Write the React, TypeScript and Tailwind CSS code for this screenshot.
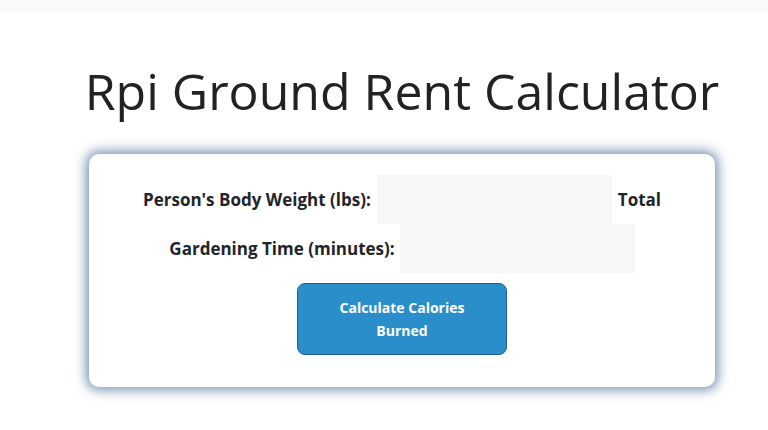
export default function App() {
  return (
    <div className="min-h-screen bg-white font-['Open_Sans',sans-serif] text-[#212529]">
      <div className="h-[12px] bg-[#f8f9fa]" />

      <div className="pl-[36px]">
        <h1 className="mt-[47px] text-center text-[50px] leading-[64px] font-normal text-[#222]">
          Rpi Ground Rent Calculator
        </h1>

        <div className="mx-auto mt-[31px] w-[626px] rounded-[10px] bg-white pt-[21px] pb-[32px] shadow-[0_0_12px_3px_rgba(60,100,145,0.7)]">
          {/* Inputs */}
          <div className="flex items-center justify-center gap-[6px]">
            <label className="text-[17px] font-bold">Person's Body Weight (lbs):</label>
            <input className="h-[49px] w-[235px] bg-[#f7f7f8] outline-none" />
            <span className="text-[17px] font-bold">Total</span>
          </div>
          <div className="flex items-center justify-center gap-[5px]">
            <label className="text-[17px] font-bold">Gardening Time (minutes):</label>
            <input className="h-[49px] w-[235px] bg-[#f7f7f8] outline-none" />
          </div>

          <div className="mt-[10px] flex justify-center">
            <button className="h-[72px] w-[210px] rounded-[8px] border border-[#1a5f95] bg-[#2a8ecb] px-6 text-[14px] leading-[23px] font-bold text-white">
              Calculate Calories Burned
            </button>
          </div>
        </div>
      </div>
    </div>
  )
}
